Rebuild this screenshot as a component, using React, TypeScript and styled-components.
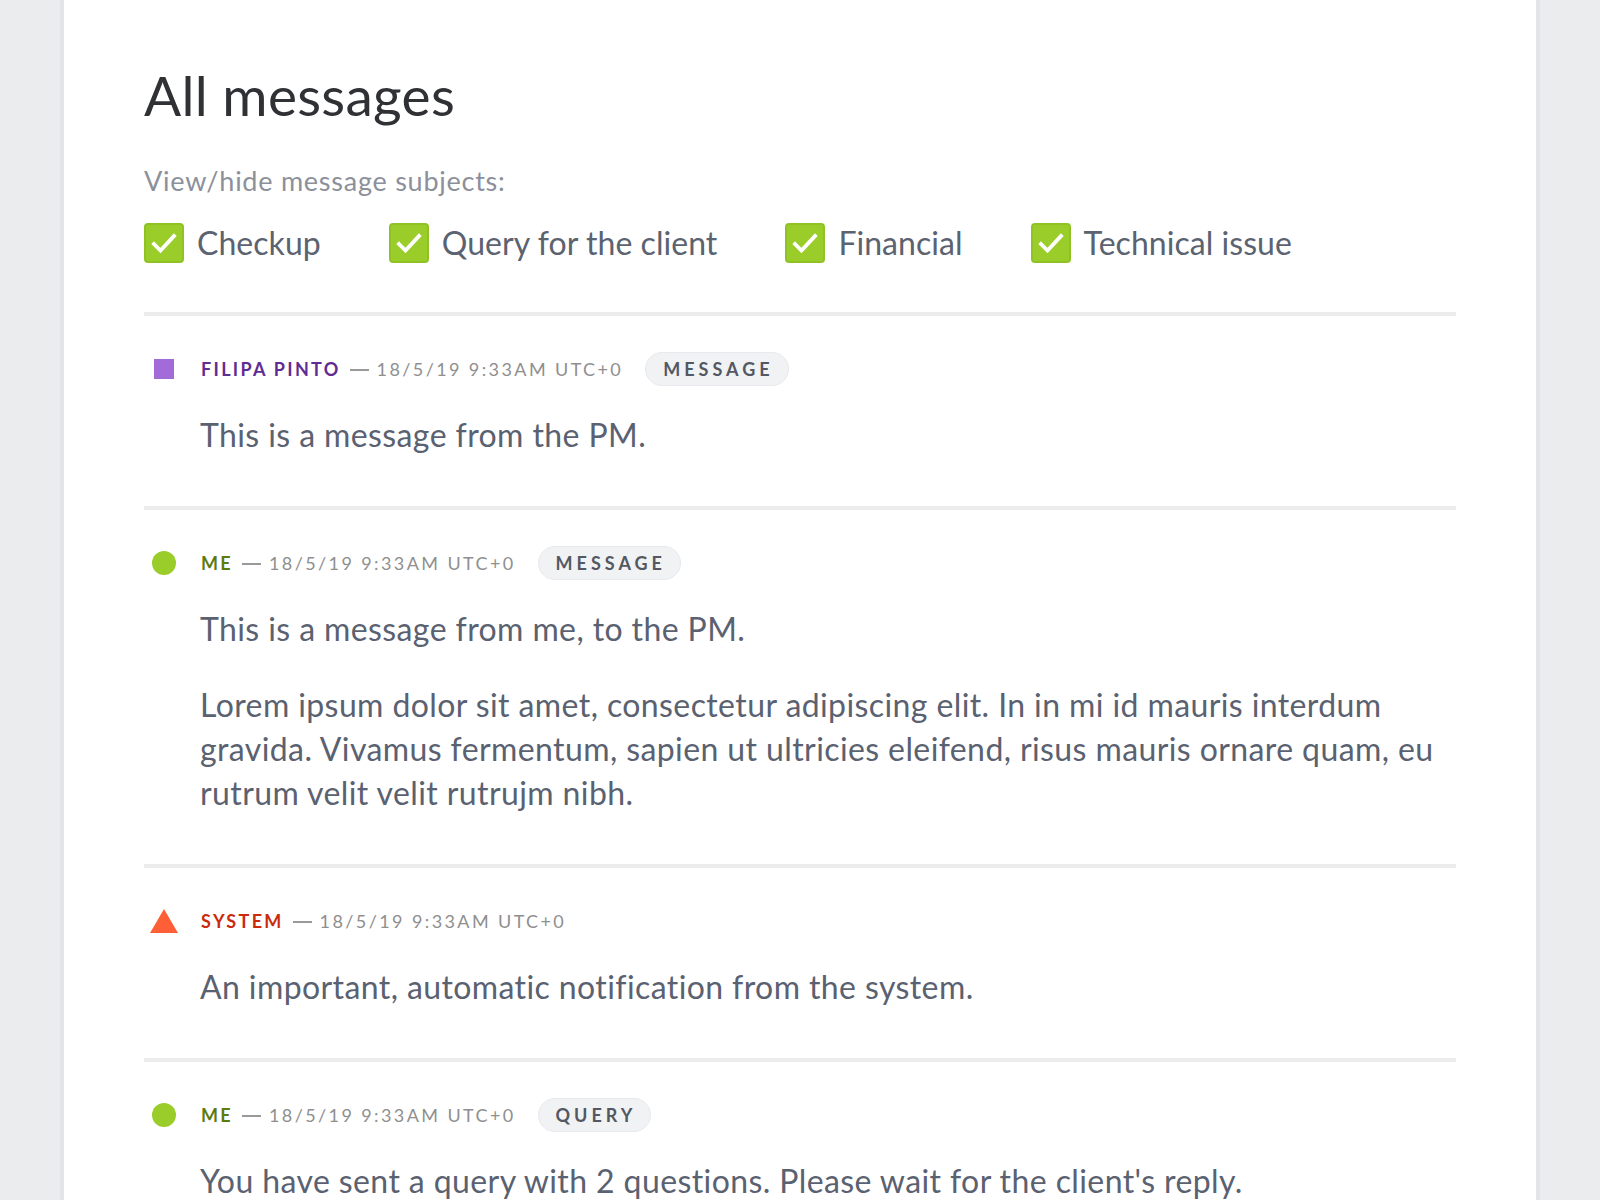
import React from "react";
import styled, { createGlobalStyle } from "styled-components";

const GlobalStyle = createGlobalStyle`
  html, body {
    margin: 0;
    padding: 0;
    background: #ebecee;
  }
  body {
    font-family: "Lato", "Open Sans", sans-serif;
    -webkit-font-smoothing: antialiased;
  }
`;

const Page = styled.div`
  min-height: 1200px;
  background: #ebecee;
  padding: 0 60px;
`;

const Card = styled.main`
  background: #ffffff;
  border-left: 4px solid #e3e4e7;
  border-right: 4px solid #e3e4e7;
  min-height: 1300px;
  padding: 61px 80px 0;
  box-sizing: border-box;
`;

const Title = styled.h1`
  margin: 0;
  font-family: "Lato", sans-serif;
  font-weight: 400;
  font-size: 55px;
  line-height: 68px;
  color: #2f3135;
  letter-spacing: 0.3px;
`;

const Subtitle = styled.p`
  margin: 34px 0 0;
  font-size: 27px;
  line-height: 36px;
  color: #8b909b;
  letter-spacing: 0.75px;
`;

const FilterRow = styled.div`
  display: flex;
  align-items: center;
  gap: 68px;
  margin-top: 24px;
  padding-bottom: 49px;
`;

const FilterItem = styled.label`
  display: flex;
  align-items: center;
  gap: 13px;
  cursor: pointer;
`;

const CheckBox = styled.span`
  width: 40px;
  height: 40px;
  box-sizing: border-box;
  border-radius: 4px;
  background: #9bcd2a;
  border: 2px solid #8fc225;
  display: flex;
  align-items: center;
  justify-content: center;
`;

const FilterLabel = styled.span`
  font-size: 32px;
  line-height: 40px;
  color: #5b6270;
  letter-spacing: 0.05px;
`;

const MessageList = styled.section`
  display: flex;
  flex-direction: column;
`;

const MessageRow = styled.article`
  border-top: 4px solid #ececec;
  padding: 36px 0 49px;
`;

const MessageHeader = styled.header`
  display: flex;
  align-items: center;
  height: 34px;
`;

const IconCell = styled.span`
  width: 40px;
  margin-right: 17px;
  display: flex;
  align-items: center;
  justify-content: center;
  flex-shrink: 0;
`;

const SquareIcon = styled.span`
  width: 20px;
  height: 20px;
  background: #a36bd8;
`;

const DotIcon = styled.span`
  width: 24px;
  height: 24px;
  border-radius: 50%;
  background: #9acd2a;
`;

const Author = styled.span<{ $color: string }>`
  font-size: 18px;
  font-weight: 700;
  letter-spacing: 2.3px;
  color: ${(p) => p.$color};
`;

const Meta = styled.span`
  font-size: 18px;
  font-weight: 400;
  letter-spacing: 2.4px;
  color: #8f8f8f;
  white-space: pre;
`;

const Dash = styled.span`
  display: inline-block;
  width: 19px;
  height: 2px;
  background: #9a9a9a;
  vertical-align: middle;
  margin: 0 8px 0 9px;
  transform: translateY(-1px);
`;

const Pill = styled.span`
  margin-left: 22px;
  height: 34px;
  box-sizing: border-box;
  padding: 0 14px 0 17px;
  border-radius: 17px;
  background: #f1f2f4;
  border: 1px solid #e8e9ec;
  display: inline-flex;
  align-items: center;
  font-size: 18px;
  font-weight: 700;
  letter-spacing: 4px;
  color: #535863;
`;

const MessageBody = styled.div`
  padding-left: 56px;
  margin-top: 27px;
  display: flex;
  flex-direction: column;
  gap: 32px;
`;

const Paragraph = styled.p`
  margin: 0;
  font-size: 32px;
  line-height: 44px;
  color: #5a6170;
  letter-spacing: 0.4px;
  white-space: nowrap;
`;

const Check = () => (
  <svg width="36" height="36" viewBox="0 0 36 36" aria-hidden="true">
    <path
      d="M8 19 L14.5 25.5 L28 11"
      fill="none"
      stroke="#ffffff"
      strokeWidth="3.8"
      strokeLinecap="square"
      strokeLinejoin="miter"
    />
  </svg>
);

const TriangleIcon = () => (
  <svg width="28" height="24" viewBox="0 0 28 24" aria-hidden="true">
    <polygon points="14,0 28,24 0,24" fill="#ff5f36" />
  </svg>
);

type Msg = {
  icon: "square" | "dot" | "triangle";
  author: string;
  color: string;
  tag?: string;
  body: React.ReactNode[];
};

const messages: Msg[] = [
  {
    icon: "square",
    author: "FILIPA PINTO",
    color: "#5f2c93",
    tag: "MESSAGE",
    body: ["This is a message from the PM."],
  },
  {
    icon: "dot",
    author: "ME",
    color: "#5d7a10",
    tag: "MESSAGE",
    body: [
      "This is a message from me, to the PM.",
      <>
        Lorem ipsum dolor sit amet, consectetur adipiscing elit. In in mi id mauris interdum
        <br />
        gravida. Vivamus fermentum, sapien ut ultricies eleifend, risus mauris ornare quam, eu
        <br />
        rutrum velit velit rutrujm nibh.
      </>,
    ],
  },
  {
    icon: "triangle",
    author: "SYSTEM",
    color: "#cb2a0c",
    body: ["An important, automatic notification from the system."],
  },
  {
    icon: "dot",
    author: "ME",
    color: "#5d7a10",
    tag: "QUERY",
    body: ["You have sent a query with 2 questions. Please wait for the client's reply."],
  },
];

const filters = ["Checkup", "Query for the client", "Financial", "Technical issue"];

const renderIcon = (icon: Msg["icon"]) => {
  if (icon === "square") return <SquareIcon />;
  if (icon === "dot") return <DotIcon />;
  return <TriangleIcon />;
};

export default function App() {
  return (
    <>
      <GlobalStyle />
      <Page>
        <Card>
          <Title>All messages</Title>
          <Subtitle>View/hide message subjects:</Subtitle>
          <FilterRow>
            {filters.map((f) => (
              <FilterItem key={f}>
                <CheckBox>
                  <Check />
                </CheckBox>
                <FilterLabel>{f}</FilterLabel>
              </FilterItem>
            ))}
          </FilterRow>
          <MessageList>
            {messages.map((m, i) => (
              <MessageRow key={i}>
                <MessageHeader>
                  <IconCell>{renderIcon(m.icon)}</IconCell>
                  <Author $color={m.color}>{m.author}</Author>
                  <Meta>
                    <Dash />
                    18/5/19 9:33AM UTC+0
                  </Meta>
                  {m.tag && <Pill>{m.tag}</Pill>}
                </MessageHeader>
                <MessageBody>
                  {m.body.map((b, j) => (
                    <Paragraph key={j}>{b}</Paragraph>
                  ))}
                </MessageBody>
              </MessageRow>
            ))}
          </MessageList>
        </Card>
      </Page>
    </>
  );
}
